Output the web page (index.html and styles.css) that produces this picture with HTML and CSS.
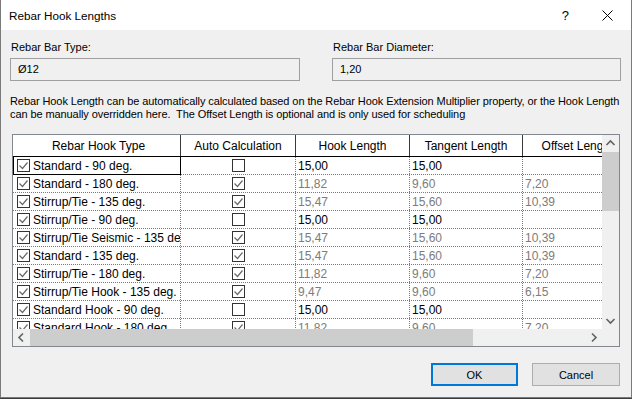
FILE: index.html
```html
<!DOCTYPE html>
<html lang="en">
<head>
    <meta charset="UTF-8">
    <title>Rebar Hook Lengths</title>
    <link rel="stylesheet" href="styles.css">
</head>
<body>
    <div class="dialog">
        <div class="title-bar">
            <span class="title">Rebar Hook Lengths</span>
            <span class="help">?</span>
            <svg class="close" width="11" height="11" viewBox="0 0 11 11">
                <path d="M0.5 0.5 L10.5 10.5 M10.5 0.5 L0.5 10.5" stroke="#000" stroke-width="1" fill="none"/>
            </svg>
        </div>

        <div class="content">
            <div class="fields">
                <div class="field">
                    <label>Rebar Bar Type:</label>
                    <div class="readonly">Ø12</div>
                </div>
                <div class="field">
                    <label>Rebar Bar Diameter:</label>
                    <div class="readonly">1,20</div>
                </div>
            </div>

            <p class="info">Rebar Hook Length can be automatically calculated based on the Rebar Hook Extension Multiplier property, or the Hook Length<br>can be manually overridden here.&nbsp; The Offset Length is optional and is only used for scheduling</p>

            <div class="grid-box">
                <div class="grid-view">
                    <div class="row header">
                        <div class="cell c1">Rebar Hook Type</div>
                        <div class="cell c2">Auto Calculation</div>
                        <div class="cell c3">Hook Length</div>
                        <div class="cell c4">Tangent Length</div>
                        <div class="cell c5">Offset Length</div>
                    </div>
                    <div id="rows"></div>
                </div>
                <div class="vscroll">
                    <svg class="arrow" width="17" height="17" viewBox="0 0 17 17"><path d="M4.5 10 L8.5 6 L12.5 10" stroke="#606060" stroke-width="1.6" fill="none"/></svg>
                    <div class="vtrack"><div class="vthumb"></div></div>
                    <svg class="arrow" width="17" height="17" viewBox="0 0 17 17"><path d="M4.5 7 L8.5 11 L12.5 7" stroke="#606060" stroke-width="1.6" fill="none"/></svg>
                </div>
                <div class="hscroll">
                    <svg class="arrow" width="17" height="17" viewBox="0 0 17 17"><path d="M10 4.5 L6 8.5 L10 12.5" stroke="#606060" stroke-width="1.6" fill="none"/></svg>
                    <div class="htrack"><div class="hthumb"></div></div>
                    <svg class="arrow" width="17" height="17" viewBox="0 0 17 17"><path d="M7 4.5 L11 8.5 L7 12.5" stroke="#606060" stroke-width="1.6" fill="none"/></svg>
                </div>
                <div class="corner"></div>
            </div>
        </div>

        <div class="buttons">
            <button class="btn default">OK</button>
            <button class="btn cancel">Cancel</button>
        </div>
    </div>

    <script>
        // hook rows: name, auto calculated?, hook, tangent, offset
        const hooks = [
            ['Standard - 90 deg.', false, '15,00', '15,00', ''],
            ['Standard - 180 deg.', true, '11,82', '9,60', '7,20'],
            ['Stirrup/Tie - 135 deg.', true, '15,47', '15,60', '10,39'],
            ['Stirrup/Tie - 90 deg.', false, '15,00', '15,00', ''],
            ['Stirrup/Tie Seismic - 135 deg.', true, '15,47', '15,60', '10,39'],
            ['Standard - 135 deg.', true, '15,47', '15,60', '10,39'],
            ['Stirrup/Tie - 180 deg.', true, '11,82', '9,60', '7,20'],
            ['Stirrup/Tie Hook - 135 deg.', true, '9,47', '9,60', '6,15'],
            ['Standard Hook - 90 deg.', false, '15,00', '15,00', ''],
            ['Standard Hook - 180 deg.', true, '11,82', '9,60', '7,20']
        ];

        const tick = '<svg width="11" height="11" viewBox="0 0 11 11"><path d="M1.5 5.5 L4.5 8.5 L9.5 2.5" stroke="#6a6a6a" stroke-width="1.2" fill="none"/></svg>';

        function box(checked) {
            return '<span class="check">' + (checked ? tick : '') + '</span>';
        }

        const rowsEl = document.getElementById('rows');
        hooks.forEach(function(h, i) {
            const row = document.createElement('div');
            row.className = 'row' + (h[1] ? ' auto' : '');
            row.innerHTML =
                '<div class="cell c1' + (i === 0 ? ' current' : '') + '">' + box(true) + '<span class="name">' + h[0] + '</span></div>' +
                '<div class="cell c2">' + box(h[1]) + '</div>' +
                '<div class="cell c3 num">' + h[2] + '</div>' +
                '<div class="cell c4 num">' + h[3] + '</div>' +
                '<div class="cell c5 num">' + h[4] + '</div>';
            rowsEl.appendChild(row);
        });
    </script>
</body>
</html>
```

FILE: styles.css
```css
* {
    margin: 0;
    padding: 0;
    box-sizing: border-box;
}
body {
    width: 632px;
    height: 399px;
    overflow: hidden;
    background: #3c3c3c;
    font-family: 'Liberation Sans', Arial, sans-serif;
    font-size: 12px;
    color: #000;
}
.dialog {
    width: 632px;
    height: 398px;
    background: #f0f0f0;
    border: 1px solid #7a7a7a;
    border-top: none;
    display: flex;
    flex-direction: column;
}

/* title bar */
.title-bar {
    height: 30px;
    background: #fff;
    display: flex;
    align-items: center;
    padding-left: 8px;
}
.title {
    flex: 1;
    font-size: 11.7px;
}
.help {
    font-size: 13px;
    margin-right: 33px;
}
.close {
    margin-right: 18px;
}

.content {
    padding: 11px 11px 0 9px;
    font-size: 11px;
}

/* top read-only fields */
.fields {
    display: grid;
    grid-template-columns: 290px 289px;
    column-gap: 32px;
}
.field label {
    display: block;
    height: 17px;
    padding-left: 1px;
}
.readonly {
    height: 23px;
    border: 1px solid #a0a0a0;
    background: #f0f0f0;
    padding: 4px 0 0 7px;
}

.info {
    margin-top: 14px;
    line-height: 13px;
    letter-spacing: -0.09px;
    white-space: nowrap;
}

/* grid */
.grid-box {
    margin-top: 13px;
    margin-left: 2px;
    width: 608px;
    height: 213px;
    border: 1px solid #828790;
    background: #fff;
    display: grid;
    grid-template-columns: 589px 17px;
    grid-template-rows: 194px 17px;
    font-size: 12px;
}
.grid-view {
    overflow: hidden;
    background: #fff;
}
.row {
    display: flex;
    height: 18px;
    border-bottom: 1px dotted #7a7a7a;
    white-space: nowrap;
}
.row.header {
    height: 22px;
    border-bottom: 1px solid #000;
}
.cell {
    flex: none;
    overflow: hidden;
    border-right: 1px dotted #7a7a7a;
    display: flex;
    align-items: center;
}
.header .cell {
    justify-content: center;
    border-right: 1px solid #3a3a3a;
    padding-top: 1px;
}
.c1 { width: 168px; padding-left: 4px; }
.c2 { width: 115px; justify-content: center; }
.c3 { width: 114px; }
.c4 { width: 113px; }
.c5 { width: 110px; }
.num {
    padding-left: 2px;
}
.auto .num {
    color: #7c7c7c;
}
.cell.current {
    border: 1px solid #000;
    border-right: 1px solid #000;
    margin-top: -1px;
    height: 19px;
    padding-left: 3px;
}
.check {
    width: 13px;
    height: 13px;
    border: 1px solid #333;
    background: #fff;
    display: inline-flex;
    align-items: center;
    justify-content: center;
    flex: none;
}
.name {
    margin-left: 3px;
}

/* scrollbars */
.vscroll {
    background: #f0f0f0;
    display: flex;
    flex-direction: column;
}
.vtrack {
    flex: 1;
}
.vthumb {
    width: 17px;
    height: 59px;
    background: #cdcdcd;
}
.hscroll {
    background: #f0f0f0;
    display: flex;
}
.htrack {
    flex: 1;
}
.hthumb {
    width: 443px;
    height: 17px;
    background: #cdcdcd;
}
.corner {
    background: #f0f0f0;
}

/* buttons */
.buttons {
    display: flex;
    justify-content: flex-end;
    gap: 14px;
    padding: 16px 11px 0 0;
}
.btn {
    width: 87px;
    height: 23px;
    font-family: inherit;
    font-size: 11px;
    background: #e1e1e1;
    border: 1px solid #adadad;
}
.btn.cancel {
    width: 88px;
}
.btn.default {
    border: 2px solid #0078d7;
}
```
